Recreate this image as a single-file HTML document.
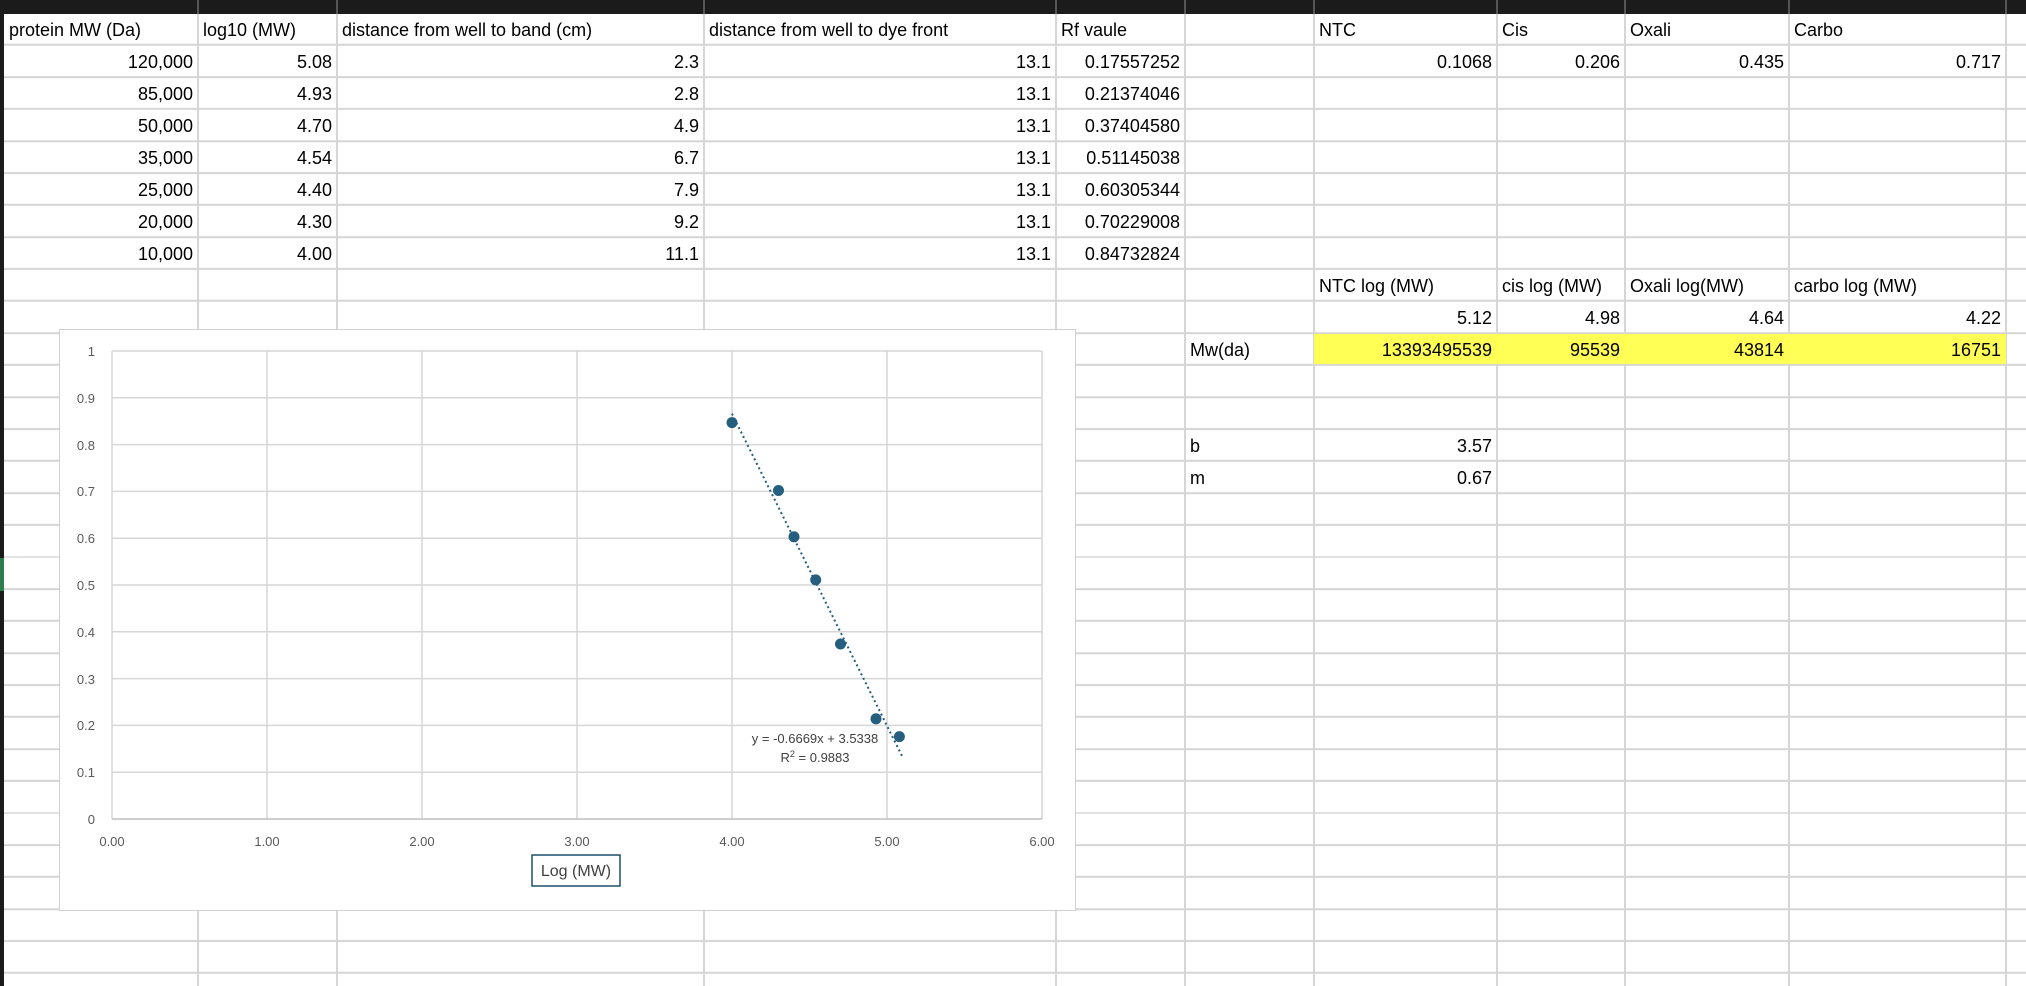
<!DOCTYPE html>
<html><head><meta charset="utf-8"><style>
html,body{margin:0;padding:0;width:2026px;height:986px;overflow:hidden;background:#fff;font-family:"Liberation Sans",sans-serif;}
#wrap{position:relative;width:2026px;height:986px;
background-image:repeating-linear-gradient(to bottom,transparent 0,transparent 30px,#d6d6d6 30px,#d6d6d6 32px);
background-position:0 14px;}
.hdr{position:absolute;left:0;top:0;width:2026px;height:14px;background:#1b1b1b;}
.lb{position:absolute;left:0;top:0;width:4px;height:986px;background:#1b1b1b;}
.vl{position:absolute;top:0;width:2px;height:986px;background:#d6d6d6;}
.vh{position:absolute;top:0;width:2px;height:14px;background:#555;}
.c{position:absolute;height:30px;line-height:32px;font-size:18px;color:#000;white-space:nowrap;overflow:visible;box-sizing:border-box;padding:0 5px;}
.r{text-align:right;}
.y{background:#ffff55;}
</style></head><body><div id="wrap">
<div class="hdr"></div>
<div class="vl" style="left:197px"></div><div class="vl" style="left:336px"></div><div class="vl" style="left:703px"></div><div class="vl" style="left:1055px"></div><div class="vl" style="left:1184px"></div><div class="vl" style="left:1313px"></div><div class="vl" style="left:1496px"></div><div class="vl" style="left:1624px"></div><div class="vl" style="left:1788px"></div><div class="vl" style="left:2005px"></div>
<div class="vh" style="left:197px"></div><div class="vh" style="left:336px"></div><div class="vh" style="left:703px"></div><div class="vh" style="left:1055px"></div><div class="vh" style="left:1184px"></div><div class="vh" style="left:1313px"></div><div class="vh" style="left:1496px"></div><div class="vh" style="left:1624px"></div><div class="vh" style="left:1788px"></div><div class="vh" style="left:2005px"></div>
<div class="lb"></div>
<div style="position:absolute;left:0;top:558px;width:4px;height:33px;background:#2e7d4f"></div>

<!-- header row -->
<div class="c" style="left:4px;top:14px;width:194px">protein MW (Da)</div>
<div class="c" style="left:198px;top:14px;width:139px">log10 (MW)</div>
<div class="c" style="left:337px;top:14px;width:367px">distance from well to band (cm)</div>
<div class="c" style="left:704px;top:14px;width:352px">distance from well to dye front</div>
<div class="c" style="left:1056px;top:14px;width:129px">Rf vaule</div>
<div class="c" style="left:1314px;top:14px;width:183px">NTC</div>
<div class="c" style="left:1497px;top:14px;width:128px">Cis</div>
<div class="c" style="left:1625px;top:14px;width:164px">Oxali</div>
<div class="c" style="left:1789px;top:14px;width:217px">Carbo</div>

<!-- data rows -->
<div class="c r" style="left:4px;top:46px;width:194px">120,000</div><div class="c r" style="left:198px;top:46px;width:139px">5.08</div><div class="c r" style="left:337px;top:46px;width:367px">2.3</div><div class="c r" style="left:704px;top:46px;width:352px">13.1</div><div class="c r" style="left:1056px;top:46px;width:129px">0.17557252</div>
<div class="c r" style="left:4px;top:78px;width:194px">85,000</div><div class="c r" style="left:198px;top:78px;width:139px">4.93</div><div class="c r" style="left:337px;top:78px;width:367px">2.8</div><div class="c r" style="left:704px;top:78px;width:352px">13.1</div><div class="c r" style="left:1056px;top:78px;width:129px">0.21374046</div>
<div class="c r" style="left:4px;top:110px;width:194px">50,000</div><div class="c r" style="left:198px;top:110px;width:139px">4.70</div><div class="c r" style="left:337px;top:110px;width:367px">4.9</div><div class="c r" style="left:704px;top:110px;width:352px">13.1</div><div class="c r" style="left:1056px;top:110px;width:129px">0.37404580</div>
<div class="c r" style="left:4px;top:142px;width:194px">35,000</div><div class="c r" style="left:198px;top:142px;width:139px">4.54</div><div class="c r" style="left:337px;top:142px;width:367px">6.7</div><div class="c r" style="left:704px;top:142px;width:352px">13.1</div><div class="c r" style="left:1056px;top:142px;width:129px">0.51145038</div>
<div class="c r" style="left:4px;top:174px;width:194px">25,000</div><div class="c r" style="left:198px;top:174px;width:139px">4.40</div><div class="c r" style="left:337px;top:174px;width:367px">7.9</div><div class="c r" style="left:704px;top:174px;width:352px">13.1</div><div class="c r" style="left:1056px;top:174px;width:129px">0.60305344</div>
<div class="c r" style="left:4px;top:206px;width:194px">20,000</div><div class="c r" style="left:198px;top:206px;width:139px">4.30</div><div class="c r" style="left:337px;top:206px;width:367px">9.2</div><div class="c r" style="left:704px;top:206px;width:352px">13.1</div><div class="c r" style="left:1056px;top:206px;width:129px">0.70229008</div>
<div class="c r" style="left:4px;top:238px;width:194px">10,000</div><div class="c r" style="left:198px;top:238px;width:139px">4.00</div><div class="c r" style="left:337px;top:238px;width:367px">11.1</div><div class="c r" style="left:704px;top:238px;width:352px">13.1</div><div class="c r" style="left:1056px;top:238px;width:129px">0.84732824</div>

<div class="c r" style="left:1314px;top:46px;width:183px">0.1068</div><div class="c r" style="left:1497px;top:46px;width:128px">0.206</div><div class="c r" style="left:1625px;top:46px;width:164px">0.435</div><div class="c r" style="left:1789px;top:46px;width:217px">0.717</div>

<div class="c" style="left:1314px;top:270px;width:183px">NTC log (MW)</div><div class="c" style="left:1497px;top:270px;width:128px">cis log (MW)</div><div class="c" style="left:1625px;top:270px;width:164px">Oxali log(MW)</div><div class="c" style="left:1789px;top:270px;width:217px">carbo log (MW)</div>
<div class="c r" style="left:1314px;top:302px;width:183px">5.12</div><div class="c r" style="left:1497px;top:302px;width:128px">4.98</div><div class="c r" style="left:1625px;top:302px;width:164px">4.64</div><div class="c r" style="left:1789px;top:302px;width:217px">4.22</div>
<div class="c" style="left:1185px;top:334px;width:129px">Mw(da)</div>
<div class="c r y" style="left:1314px;top:334px;width:183px">13393495539</div><div class="c r y" style="left:1497px;top:334px;width:128px">95539</div><div class="c r y" style="left:1625px;top:334px;width:164px">43814</div><div class="c r y" style="left:1789px;top:334px;width:217px">16751</div>
<div class="c" style="left:1185px;top:430px;width:129px">b</div><div class="c r" style="left:1314px;top:430px;width:183px">3.57</div>
<div class="c" style="left:1185px;top:462px;width:129px">m</div><div class="c r" style="left:1314px;top:462px;width:183px">0.67</div>

<!-- chart -->
<svg style="position:absolute;left:59px;top:329px" width="1017" height="582" viewBox="0 0 1017 582" font-family="Liberation Sans, sans-serif">
<rect x="0.5" y="0.5" width="1016" height="581" fill="#fff" stroke="#d0d0d0"/>
<g stroke="#d6d6d6" stroke-width="1.5">
<line x1="53" y1="22" x2="983" y2="22"/><line x1="53" y1="68.8" x2="983" y2="68.8"/><line x1="53" y1="115.6" x2="983" y2="115.6"/><line x1="53" y1="162.4" x2="983" y2="162.4"/><line x1="53" y1="209.2" x2="983" y2="209.2"/><line x1="53" y1="256" x2="983" y2="256"/><line x1="53" y1="302.8" x2="983" y2="302.8"/><line x1="53" y1="349.6" x2="983" y2="349.6"/><line x1="53" y1="396.4" x2="983" y2="396.4"/><line x1="53" y1="443.2" x2="983" y2="443.2"/>
<line x1="53" y1="22" x2="53" y2="490"/><line x1="208" y1="22" x2="208" y2="490"/><line x1="363" y1="22" x2="363" y2="490"/><line x1="518" y1="22" x2="518" y2="490"/><line x1="673" y1="22" x2="673" y2="490"/><line x1="828" y1="22" x2="828" y2="490"/><line x1="983" y1="22" x2="983" y2="490"/>
</g>
<line x1="53" y1="490" x2="983" y2="490" stroke="#bfbfbf" stroke-width="1.5"/>
<g font-size="13" fill="#595959" text-anchor="end">
<text x="36" y="27">1</text><text x="36" y="74">0.9</text><text x="36" y="121">0.8</text><text x="36" y="167">0.7</text><text x="36" y="214">0.6</text><text x="36" y="261">0.5</text><text x="36" y="308">0.4</text><text x="36" y="355">0.3</text><text x="36" y="401">0.2</text><text x="36" y="448">0.1</text><text x="36" y="495">0</text>
</g>
<g font-size="13" fill="#595959" text-anchor="middle">
<text x="53" y="517">0.00</text><text x="208" y="517">1.00</text><text x="363" y="517">2.00</text><text x="518" y="517">3.00</text><text x="673" y="517">4.00</text><text x="828" y="517">5.00</text><text x="983" y="517">6.00</text>
</g>
<line x1="673" y1="84.7" x2="843.5" y2="428" stroke="#255e7e" stroke-width="2" stroke-dasharray="2,3"/>
<g fill="#255e7e">
<circle cx="673" cy="93.6" r="5.5"/><circle cx="719.5" cy="161.5" r="5.5"/><circle cx="735" cy="207.8" r="5.5"/><circle cx="756.7" cy="250.9" r="5.5"/><circle cx="781.5" cy="315" r="5.5"/><circle cx="817" cy="389.8" r="5.5"/><circle cx="840.4" cy="407.6" r="5.5"/>
</g>
<g font-size="13" fill="#404040" text-anchor="middle">
<text x="756" y="414">y = -0.6669x + 3.5338</text>
<text x="756" y="433">R<tspan font-size="9" dy="-5">2</tspan><tspan dy="5"> = 0.9883</tspan></text>
</g>
<rect x="473" y="526" width="88" height="31" fill="#fff" stroke="#1f4e6b" stroke-width="1.5"/>
<text x="517" y="547" font-size="16" fill="#404040" text-anchor="middle">Log (MW)</text>
</svg>
</div></body></html>
